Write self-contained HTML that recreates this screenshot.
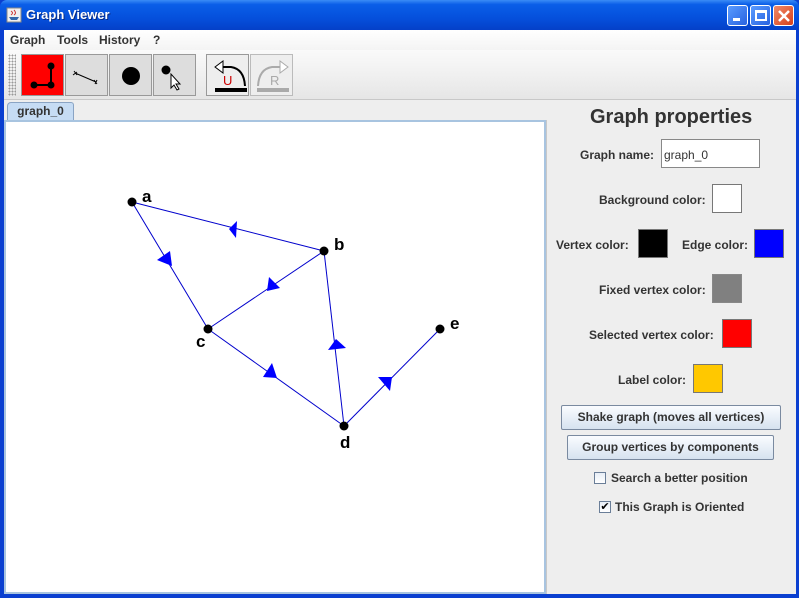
<!DOCTYPE html>
<html><head><style>
*{margin:0;padding:0;box-sizing:border-box}
body{width:799px;height:598px;overflow:hidden;background:#0a3fd0;font-family:"Liberation Sans",sans-serif;position:relative}
.abs{position:absolute}
#title{left:0;top:0;width:799px;height:30px;background:linear-gradient(#3a8cf6 0%,#0a5ee8 15%,#0550dc 60%,#0440c8 100%);border-radius:7px 7px 0 0}
#title span{position:absolute;left:26px;top:7px;color:#fff;font-weight:bold;font-size:13px;text-shadow:1px 1px #0a2a80}
.wb{top:5px;width:21px;height:21px;border:1px solid #fff;border-radius:3px;background:linear-gradient(135deg,#5a9cff,#2862e0)}
#client{left:4px;top:30px;width:792px;height:564px;background:#eeeeee}
#menu{left:0;top:0;width:792px;height:20px;background:linear-gradient(#fff,#f4f4f4)}
#menu span{position:absolute;top:3px;font-size:12px;font-weight:bold;color:#333}
#tb{left:0;top:20px;width:792px;height:50px;background:linear-gradient(#fafafa,#e6e6e6);border-bottom:1px solid #c8c8c8}
.btn{top:4px;width:43px;height:42px;border:1px solid #999;background:#ddd}
.lbl{font-size:12px;font-weight:bold;color:#333;position:absolute;white-space:nowrap}
.sw{position:absolute;border:1px solid #777}
.pb{position:absolute;height:25px;border:1px solid #7a8aa0;background:linear-gradient(#fafcff,#d6e2ef);font-size:12px;font-weight:bold;color:#333;text-align:center;line-height:23px;border-radius:2px}
.cb{position:absolute;width:12px;height:12px;border:1px solid #6a7e98;background:linear-gradient(#e8eef6,#fff)}
</style></head><body>
<div id="title" class="abs">
<svg class="abs" style="left:6px;top:7px" width="16" height="16"><rect x="1" y="1" width="14" height="14" fill="#f0f0f0" stroke="#888"/><path d="M5 4q3 2 0 4M8 3q3 3 0 5" stroke="#c33" fill="none"/><path d="M3 10h10l-2 3H5z" fill="#36a"/></svg>
<span>Graph Viewer</span>
<div class="abs wb" style="left:727px"><div class="abs" style="left:5px;top:12px;width:7px;height:3px;background:#fff"></div></div>
<div class="abs wb" style="left:750px"><div class="abs" style="left:4px;top:4px;width:12px;height:11px;border:2px solid #fff;border-top-width:3px"></div></div>
<div class="abs wb" style="left:773px;background:linear-gradient(135deg,#f08a6a,#d8401a)"><svg class="abs" style="left:3px;top:3px" width="14" height="14"><path d="M2 2L12 12M12 2L2 12" stroke="#fff" stroke-width="2.5"/></svg></div>
</div>
<div id="client" class="abs">
<div id="menu" class="abs"><span style="left:6px">Graph</span><span style="left:53px">Tools</span><span style="left:95px">History</span><span style="left:149px">?</span></div>
<div id="tb" class="abs">
<div class="abs" style="left:4px;top:4px;width:8px;height:42px;background-image:radial-gradient(#999 0.8px,transparent 1px);background-size:3px 3px"></div>
<div class="abs btn" style="left:17px;background:#f00"><svg width="43" height="42"><path d="M12 30H29V11" stroke="#000" stroke-width="2" fill="none"/><circle cx="12" cy="30" r="3.5"/><circle cx="29" cy="30" r="3.5"/><circle cx="29" cy="11" r="3.5"/></svg></div>
<div class="abs btn" style="left:61px"><svg width="43" height="42"><path d="M9 18L30 27M8 16l3 4M7 20l4-3M28 25l3 4M29 29l2-4" stroke="#000" stroke-width="1" fill="none"/></svg></div>
<div class="abs btn" style="left:105px"><svg width="43" height="42"><circle cx="21" cy="21" r="9"/></svg></div>
<div class="abs btn" style="left:149px"><svg width="43" height="42"><circle cx="12" cy="15" r="4.5"/><path d="M17 19v14l3-3 3 5 2-1-3-5h4z" fill="#fff" stroke="#000"/></svg></div>
<div class="abs btn" style="left:202px;background:#eee"><svg width="43" height="42"><path d="M8 33h32v4H8z"/><path d="M15 12h9q13 2 14 19" stroke="#000" stroke-width="2" fill="none"/><path d="M8 12l8-6v12z" fill="#fff" stroke="#000"/><text x="16" y="30" fill="#c00" font-size="13" font-family="Liberation Sans">U</text></svg></div>
<div class="abs btn" style="left:246px;background:#eee;border-color:#bbb"><svg width="43" height="42"><path d="M6 33h32v4H6z" fill="#aaa"/><path d="M30 12h-9q-13 2-14 19" stroke="#aaa" stroke-width="2" fill="none"/><path d="M37 12l-8-6v12z" fill="#fff" stroke="#aaa"/><text x="19" y="30" fill="#aaa" font-size="13" font-family="Liberation Sans">R</text></svg></div>
</div>
<div class="abs" style="left:3px;top:72px;width:67px;height:18px;background:#c6dcf4;border:1px solid #8aa4c4;border-bottom:none;border-radius:4px 3px 0 0;font-size:12px;font-weight:bold;color:#333;text-align:center;line-height:17px">graph_0</div>
<div class="abs" style="left:0;top:90px;width:542px;height:474px;background:#fff;border:2px solid #a8c4e0">
<svg width="538" height="470" style="position:absolute;left:0;top:0" viewBox="6 122 538 470">
<g stroke="#0000cc" stroke-width="1"><line x1="132" y1="202" x2="324" y2="251"/><line x1="132" y1="202" x2="208" y2="329"/><line x1="208" y1="329" x2="324" y2="251"/><line x1="324" y1="251" x2="344" y2="426"/><line x1="208" y1="329" x2="344" y2="426"/><line x1="344" y1="426" x2="440" y2="329"/></g>
<g fill="#0000ff"><polygon points="237,221 229,229 236,238"/><polygon points="170,251 157,260 172,266"/><polygon points="269,277 267,291 280,288"/><polygon points="336,339 328,350 346,348"/><polygon points="272,363 263,377 277,378"/><polygon points="378,377 392,377 390,391"/></g>
<g fill="#000"><circle cx="132" cy="202" r="4.5"/><circle cx="324" cy="251" r="4.5"/><circle cx="208" cy="329" r="4.5"/><circle cx="344" cy="426" r="4.5"/><circle cx="440" cy="329" r="4.5"/></g>
<g font-size="17" font-weight="bold" font-family="Liberation Sans"><text x="142" y="202">a</text><text x="334" y="250">b</text><text x="196" y="347">c</text><text x="340" y="448">d</text><text x="450" y="329">e</text></g>
</svg></div>
<div class="abs" style="left:542px;top:90px;width:1px;height:474px;background:#c8c8c8"></div>
<div class="abs" style="left:586px;top:76px;font-size:20px;font-weight:bold;color:#333">Graph properties</div>
<span class="lbl" style="left:576px;top:118px">Graph name:</span>
<div class="abs" style="left:657px;top:109px;width:99px;height:29px;background:#fff;border:1px solid #888;font-size:12px;color:#333;padding:8px 0 0 2px">graph_0</div>
<span class="lbl" style="left:595px;top:163px">Background color:</span><div class="sw" style="left:708px;top:154px;width:30px;height:29px;background:#fff"></div>
<span class="lbl" style="left:552px;top:208px">Vertex color:</span><div class="sw" style="left:634px;top:199px;width:30px;height:29px;background:#000"></div>
<span class="lbl" style="left:678px;top:208px">Edge color:</span><div class="sw" style="left:750px;top:199px;width:30px;height:29px;background:#0000ff"></div>
<span class="lbl" style="left:595px;top:253px">Fixed vertex color:</span><div class="sw" style="left:708px;top:244px;width:30px;height:29px;background:#808080;border-color:#888"></div>
<span class="lbl" style="left:585px;top:298px">Selected vertex color:</span><div class="sw" style="left:718px;top:289px;width:30px;height:29px;background:#ff0000"></div>
<span class="lbl" style="left:614px;top:343px">Label color:</span><div class="sw" style="left:689px;top:334px;width:30px;height:29px;background:#ffc800"></div>
<div class="pb" style="left:557px;top:375px;width:220px">Shake graph (moves all vertices)</div>
<div class="pb" style="left:563px;top:405px;width:207px">Group vertices by components</div>
<div class="cb" style="left:590px;top:442px"></div><span class="lbl" style="left:607px;top:441px">Search a better position</span>
<div class="cb" style="left:595px;top:471px;font-size:11px;line-height:10px;text-align:center">&#10004;</div><span class="lbl" style="left:611px;top:470px">This Graph is Oriented</span>
</div>
</body></html>
